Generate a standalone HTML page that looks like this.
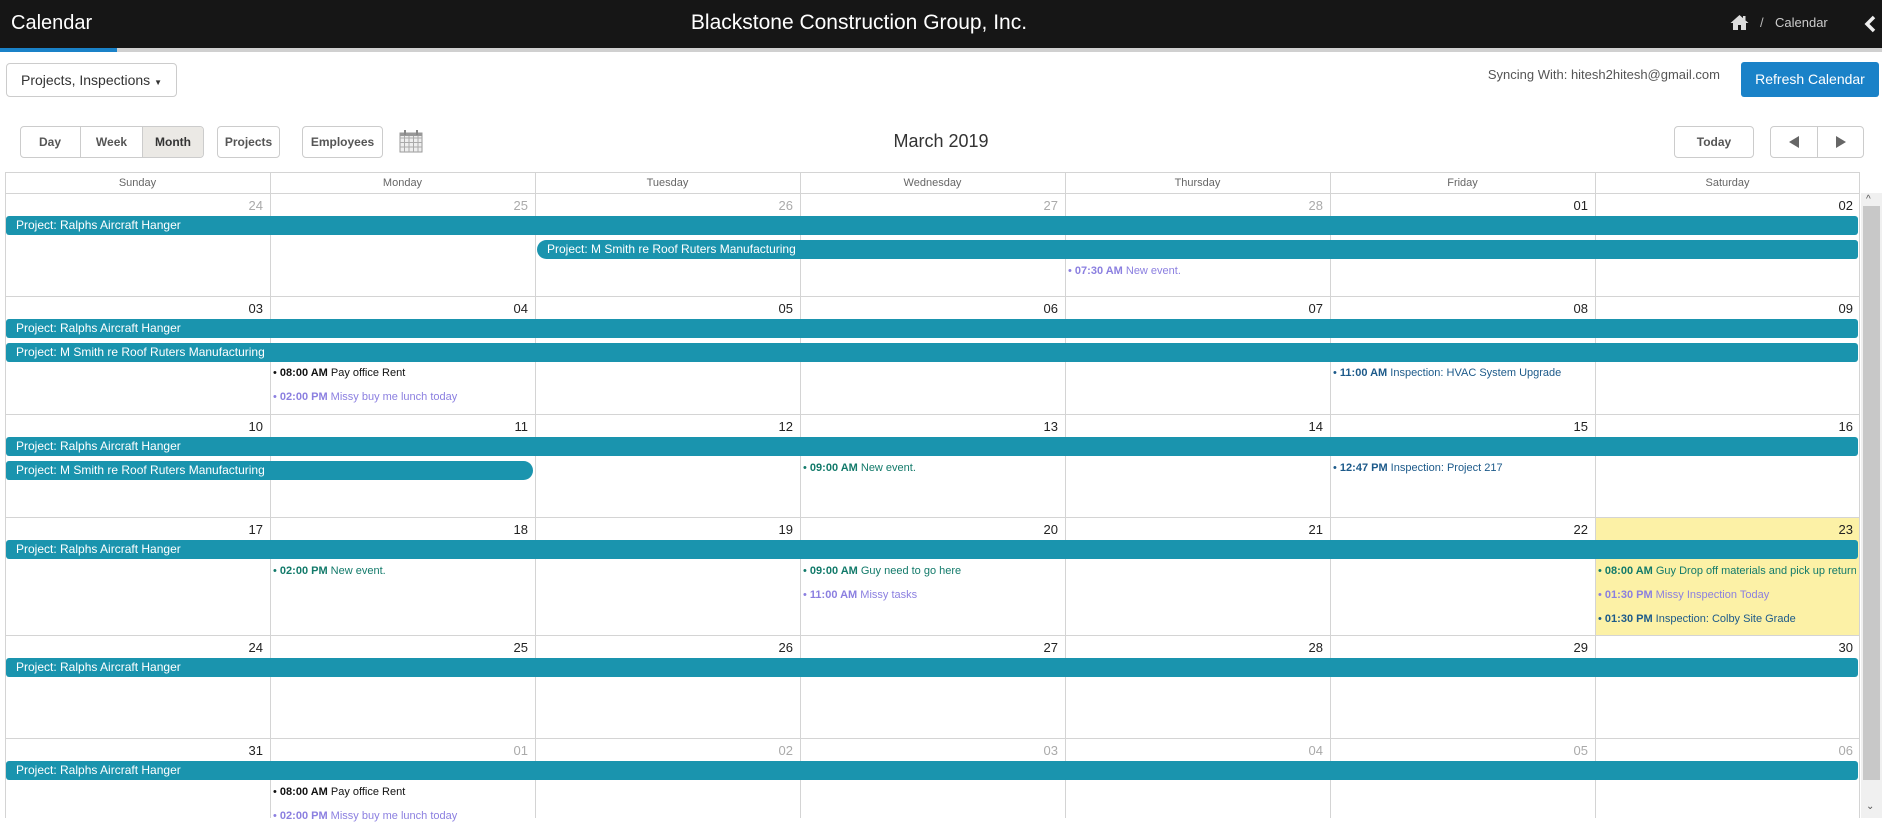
<!DOCTYPE html>
<html><head><meta charset="utf-8">
<style>
*{margin:0;padding:0;box-sizing:border-box}
body{width:1882px;height:818px;overflow:hidden;background:#fff;font-family:"Liberation Sans",Arial,sans-serif;position:relative}
.a{position:absolute}
.btn{position:absolute;border:1px solid #ccc;border-radius:4px;background:#fff;color:#555;font-size:12px;font-weight:bold;text-align:center;line-height:30px;height:32px;white-space:nowrap}
.dn{position:absolute;font-size:13px;color:#222;text-align:right;width:258px}
.dn.o{color:#aaa}
.bar{position:absolute;height:19px;background:#1a94ae;color:#fff;font-size:12px;line-height:19px;padding-left:10px;border-radius:3px;white-space:nowrap;overflow:hidden}
.ev{position:absolute;font-size:11px;white-space:nowrap;overflow:hidden;width:260px;line-height:14px}
.ev b{font-weight:bold}
.g{color:#127a6a}.p{color:#8b7fe0}.n{color:#1c5a8a}.k{color:#111}
.vl{position:absolute;width:1px;background:#d4d4d4}
.hl{position:absolute;height:1px;background:#d4d4d4;left:5px;width:1855px}
.hd{position:absolute;top:173px;height:20px;line-height:20px;font-size:11px;color:#666;text-align:center;width:265px}
.vb{position:absolute;top:127px;font-size:12px;font-weight:bold;color:#555;text-align:center;line-height:30px;height:30px}
</style></head><body>
<div class="a" style="left:0;top:0;width:1882px;height:48px;background:#161616"></div>
<div class="a" style="left:0;top:48px;width:1882px;height:4px;background:#d0d0d0"></div>
<div class="a" style="left:0;top:48px;width:117px;height:4px;background:#1a82c8"></div>
<div class="a" style="left:11px;top:12px;color:#fff;font-size:20px">Calendar</div>
<div class="a" style="left:0;width:1718px;top:11px;color:#fff;font-size:21px;text-align:center">Blackstone Construction Group, Inc.</div>
<svg class="a" style="left:1730px;top:14px" width="19" height="17" viewBox="0 0 19 17"><path d="M9.5 1L0.5 9h2.5v7h5v-5h3v5h5V9h2.5z" fill="#ddd"/><rect x="13" y="2" width="2.5" height="4" fill="#ddd"/></svg>
<div class="a" style="left:1760px;top:15px;color:#bbb;font-size:13px">/</div>
<div class="a" style="left:1775px;top:15px;color:#ccc;font-size:13px">Calendar</div>
<svg class="a" style="left:1864px;top:15px" width="12" height="18" viewBox="0 0 12 18"><path d="M10 2L3 9l7 7" stroke="#eee" stroke-width="3.5" fill="none"/></svg>

<div class="btn" style="left:6px;top:63px;width:171px;height:34px;line-height:32px;font-weight:normal;color:#333;font-size:14px">Projects, Inspections <span style="font-size:8px">▼</span></div>
<div class="a" style="right:162px;top:67px;font-size:13px;color:#555;white-space:nowrap">Syncing With: hitesh2hitesh@gmail.com</div>
<div class="a" style="left:1741px;top:62px;width:138px;height:35px;background:#1a82c8;border-radius:3px;color:#fff;font-size:14px;text-align:center;line-height:35px">Refresh Calendar</div>

<div class="btn" style="left:20px;top:126px;width:184px"></div>
<div class="vb" style="left:20px;width:60px">Day</div>
<div class="a" style="left:80px;top:127px;width:1px;height:30px;background:#ccc"></div>
<div class="vb" style="left:81px;width:61px">Week</div>
<div class="vb" style="left:142px;width:61px;background:#ebe9e5;border-left:1px solid #ccc;border-radius:0 3px 3px 0;color:#333">Month</div>
<div class="btn" style="left:217px;top:126px;width:63px">Projects</div>
<div class="btn" style="left:302px;top:126px;width:81px">Employees</div>
<svg class="a" style="left:399px;top:130px" width="24" height="23" viewBox="0 0 24 23"><rect x="1" y="3" width="22" height="19" fill="#eee" stroke="#999"/><g stroke="#aaa" stroke-width="1"><path d="M1 8h22M1 12.5h22M1 17h22M5.5 3v19M10 3v19M14.5 3v19M19 3v19"/></g><rect x="1" y="3" width="22" height="3" fill="#999"/><rect x="5" y="0" width="2" height="5" fill="#888"/><rect x="17" y="0" width="2" height="5" fill="#888"/></svg>
<div class="a" style="left:0;width:1882px;top:131px;text-align:center;font-size:18px;color:#333">March 2019</div>
<div class="btn" style="left:1674px;top:126px;width:80px">Today</div>
<div class="btn" style="left:1770px;top:126px;width:94px"></div>
<div class="a" style="left:1817px;top:127px;width:1px;height:30px;background:#ccc"></div>
<div class="a" style="left:1789px;top:136px;width:0;height:0;border-top:6px solid transparent;border-bottom:6px solid transparent;border-right:10px solid #666"></div>
<div class="a" style="left:1836px;top:136px;width:0;height:0;border-top:6px solid transparent;border-bottom:6px solid transparent;border-left:10px solid #666"></div>

<div class="hl" style="top:172px"></div>
<div class="hl" style="top:193px"></div>
<div class="hd" style="left:5px">Sunday</div>
<div class="hd" style="left:270px">Monday</div>
<div class="hd" style="left:535px">Tuesday</div>
<div class="hd" style="left:800px">Wednesday</div>
<div class="hd" style="left:1065px">Thursday</div>
<div class="hd" style="left:1330px">Friday</div>
<div class="hd" style="left:1595px">Saturday</div>

<div class="a" style="left:1596px;top:518px;width:263px;height:117px;background:#fcf1a6"></div>

<div class="vl" style="left:5px;top:172px;height:646px"></div>
<div class="vl" style="left:270px;top:172px;height:646px"></div>
<div class="vl" style="left:535px;top:172px;height:646px"></div>
<div class="vl" style="left:800px;top:172px;height:646px"></div>
<div class="vl" style="left:1065px;top:172px;height:646px"></div>
<div class="vl" style="left:1330px;top:172px;height:646px"></div>
<div class="vl" style="left:1595px;top:172px;height:646px"></div>
<div class="vl" style="left:1859px;top:172px;height:646px"></div>
<div class="hl" style="top:296px"></div>
<div class="hl" style="top:414px"></div>
<div class="hl" style="top:517px"></div>
<div class="hl" style="top:635px"></div>
<div class="hl" style="top:738px"></div>

<div class="a" style="left:1861px;top:193px;width:21px;height:625px;background:#f0f0f0"></div>
<div class="a" style="left:1863px;top:206px;width:17px;height:574px;background:#c8c8c8"></div>
<div class="a" style="left:1866px;top:194px;font-size:10px;color:#555">&#94;</div>
<div class="a" style="left:1866px;top:801px;font-size:10px;color:#555">&#8964;</div>

<div class="dn o" style="left:5px;top:198px">24</div>
<div class="dn o" style="left:270px;top:198px">25</div>
<div class="dn o" style="left:535px;top:198px">26</div>
<div class="dn o" style="left:800px;top:198px">27</div>
<div class="dn o" style="left:1065px;top:198px">28</div>
<div class="dn" style="left:1330px;top:198px">01</div>
<div class="dn" style="left:1595px;top:198px">02</div>
<div class="bar" style="left:6px;top:216px;width:1852px">Project: Ralphs Aircraft Hanger</div>
<div class="bar" style="left:537px;top:240px;width:1321px;border-radius:10px 3px 3px 10px">Project: M Smith re Roof Ruters Manufacturing</div>
<div class="ev p" style="left:1068px;top:264px">• <b>07:30 AM</b> New event.</div>

<div class="dn" style="left:5px;top:301px">03</div>
<div class="dn" style="left:270px;top:301px">04</div>
<div class="dn" style="left:535px;top:301px">05</div>
<div class="dn" style="left:800px;top:301px">06</div>
<div class="dn" style="left:1065px;top:301px">07</div>
<div class="dn" style="left:1330px;top:301px">08</div>
<div class="dn" style="left:1595px;top:301px">09</div>
<div class="bar" style="left:6px;top:319px;width:1852px">Project: Ralphs Aircraft Hanger</div>
<div class="bar" style="left:6px;top:343px;width:1852px">Project: M Smith re Roof Ruters Manufacturing</div>
<div class="ev k" style="left:273px;top:366px">• <b>08:00 AM</b> Pay office Rent</div>
<div class="ev p" style="left:273px;top:390px">• <b>02:00 PM</b> Missy buy me lunch today</div>
<div class="ev n" style="left:1333px;top:366px">• <b>11:00 AM</b> Inspection: HVAC System Upgrade</div>

<div class="dn" style="left:5px;top:419px">10</div>
<div class="dn" style="left:270px;top:419px">11</div>
<div class="dn" style="left:535px;top:419px">12</div>
<div class="dn" style="left:800px;top:419px">13</div>
<div class="dn" style="left:1065px;top:419px">14</div>
<div class="dn" style="left:1330px;top:419px">15</div>
<div class="dn" style="left:1595px;top:419px">16</div>
<div class="bar" style="left:6px;top:437px;width:1852px">Project: Ralphs Aircraft Hanger</div>
<div class="bar" style="left:6px;top:461px;width:527px;border-radius:3px 10px 10px 3px">Project: M Smith re Roof Ruters Manufacturing</div>
<div class="ev g" style="left:803px;top:461px">• <b>09:00 AM</b> New event.</div>
<div class="ev n" style="left:1333px;top:461px">• <b>12:47 PM</b> Inspection: Project 217</div>

<div class="dn" style="left:5px;top:522px">17</div>
<div class="dn" style="left:270px;top:522px">18</div>
<div class="dn" style="left:535px;top:522px">19</div>
<div class="dn" style="left:800px;top:522px">20</div>
<div class="dn" style="left:1065px;top:522px">21</div>
<div class="dn" style="left:1330px;top:522px">22</div>
<div class="dn" style="left:1595px;top:522px">23</div>
<div class="bar" style="left:6px;top:540px;width:1852px">Project: Ralphs Aircraft Hanger</div>
<div class="ev g" style="left:273px;top:564px">• <b>02:00 PM</b> New event.</div>
<div class="ev g" style="left:803px;top:564px">• <b>09:00 AM</b> Guy need to go here</div>
<div class="ev p" style="left:803px;top:588px">• <b>11:00 AM</b> Missy tasks</div>
<div class="ev g" style="left:1598px;top:564px;width:258px">• <b>08:00 AM</b> Guy Drop off materials and pick up return</div>
<div class="ev p" style="left:1598px;top:588px">• <b>01:30 PM</b> Missy Inspection Today</div>
<div class="ev n" style="left:1598px;top:612px">• <b>01:30 PM</b> Inspection: Colby Site Grade</div>

<div class="dn" style="left:5px;top:640px">24</div>
<div class="dn" style="left:270px;top:640px">25</div>
<div class="dn" style="left:535px;top:640px">26</div>
<div class="dn" style="left:800px;top:640px">27</div>
<div class="dn" style="left:1065px;top:640px">28</div>
<div class="dn" style="left:1330px;top:640px">29</div>
<div class="dn" style="left:1595px;top:640px">30</div>
<div class="bar" style="left:6px;top:658px;width:1852px">Project: Ralphs Aircraft Hanger</div>

<div class="dn" style="left:5px;top:743px">31</div>
<div class="dn o" style="left:270px;top:743px">01</div>
<div class="dn o" style="left:535px;top:743px">02</div>
<div class="dn o" style="left:800px;top:743px">03</div>
<div class="dn o" style="left:1065px;top:743px">04</div>
<div class="dn o" style="left:1330px;top:743px">05</div>
<div class="dn o" style="left:1595px;top:743px">06</div>
<div class="bar" style="left:6px;top:761px;width:1852px">Project: Ralphs Aircraft Hanger</div>
<div class="ev k" style="left:273px;top:785px">• <b>08:00 AM</b> Pay office Rent</div>
<div class="ev p" style="left:273px;top:809px">• <b>02:00 PM</b> Missy buy me lunch today</div>
</body></html>
